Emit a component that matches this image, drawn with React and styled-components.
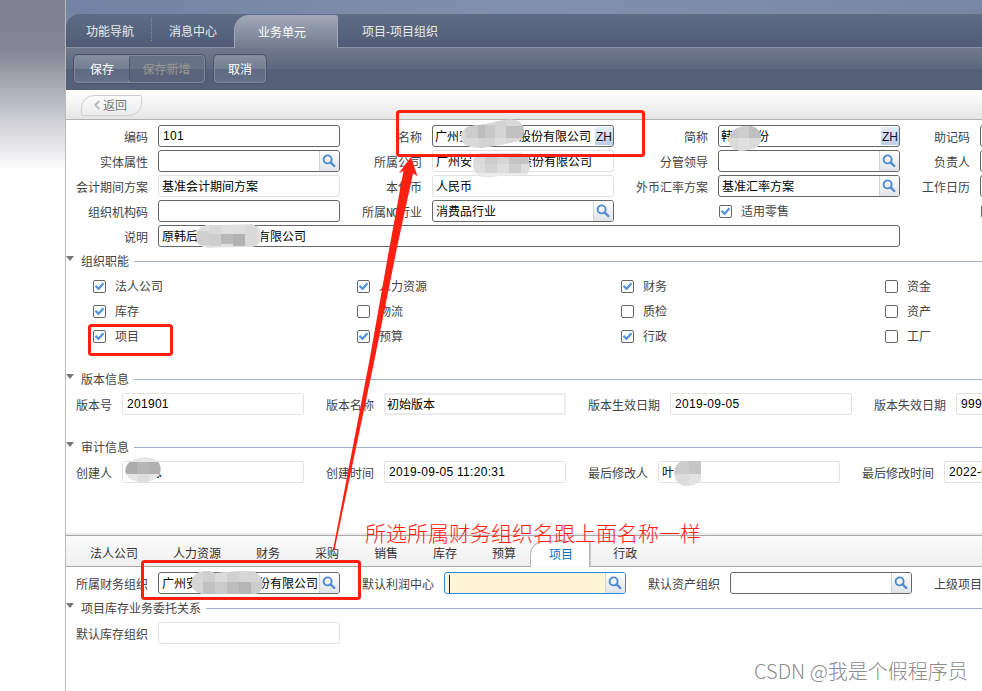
import styled, { createGlobalStyle } from 'styled-components';

const topTabs = [
  { label: '功能导航', divider: true },
  { label: '消息中心' },
  { label: '业务单元', active: true },
  { label: '项目-项目组织' },
];

const duties = [
  ['法人公司', true],
  ['人力资源', true],
  ['财务', true],
  ['资金', false],
  ['库存', true],
  ['物流', false],
  ['质检', false],
  ['资产', false],
  ['项目', true],
  ['预算', true],
  ['行政', true],
  ['工厂', false],
];

const bottomTabs = [
  '法人公司',
  '人力资源',
  '财务',
  '采购',
  '销售',
  '库存',
  '预算',
  '项目',
  '行政',
];

// masked parts of the personal data: outline + grey cells [x, y, w, h, color]
const masks = [
  {
    id: 'name',
    d: 'M461 136C461 129 466 126 478 125L507 119.5C517 118 524 122 524 131C524 139 520 142 511 143L485 147.500C470 149 461 146 461 136Z',
    base: '#d9d9d9',
    cells: [
      [466, 125, 12, 13, '#cccccc'],
      [478, 125, 7, 13, '#bdbdbd'],
      [485, 125, 10, 13, '#c8c8c8'],
      [495, 119, 11, 19, '#d4d4d4'],
      [506, 126, 18, 12, '#c1c1c1'],
      [478, 138, 17, 12, '#d3d3d3'],
      [495, 138, 11, 12, '#dddddd'],
    ],
  },
  {
    id: 'company',
    d: 'M480 153H522Q530 156 530 168Q529 177 520 175L482 177Q473 174 473 165Q473 155 480 153Z',
    base: '#dedede',
    cells: [
      [473, 157, 12, 7, '#dadada'],
      [485, 157, 12, 7, '#cccccc'],
      [497, 157, 12, 7, '#d5d5d5'],
      [509, 157, 21, 7, '#c4c4c4'],
      [485, 164, 12, 14, '#d3d3d3'],
      [509, 164, 12, 10, '#cecece'],
      [473, 173, 57, 5, '#eaeaea'],
    ],
  },
  {
    id: 'remark',
    d: 'M206 225L252 224Q262 227 262 236Q261 246 252 247L208 248Q196 247 196 236Q197 227 206 225Z',
    base: '#e0e0e0',
    cells: [
      [197, 231, 12, 14, '#d0d0d0'],
      [209, 225, 12, 9, '#d8d8d8'],
      [209, 234, 12, 12, '#cecece'],
      [221, 234, 12, 10, '#b9b9b9'],
      [233, 234, 12, 12, '#b2b2b2'],
      [245, 226, 12, 20, '#dadada'],
    ],
  },
  {
    id: 'short',
    d: 'M743 126Q756 124 760 133Q764 142 756 148Q746 152 734 150Q727 144 729 136Q733 128 743 126Z',
    base: '#dadada',
    cells: [
      [729, 126, 9, 12, '#c9c9c9'],
      [738, 126, 11, 12, '#cecece'],
      [749, 126, 13, 12, '#bfbfbf'],
      [738, 138, 11, 13, '#e0e0e0'],
    ],
  },
  {
    id: 'creator',
    d: 'M133 460Q145 454 157 460Q162 466 160 473Q157 482 143 482Q129 482 126 474Q123 465 133 460Z',
    base: '#e6e6e6',
    cells: [
      [125, 462, 12, 12, '#acacac'],
      [137, 462, 12, 12, '#b6b6b6'],
      [149, 462, 13, 12, '#b0b0b0'],
      [137, 474, 12, 9, '#dedede'],
    ],
  },
  {
    id: 'editor',
    d: 'M682 461H701V481Q695 486 688 486Q679 486 676 480Q673 474 675 468Q677 463 682 461Z',
    base: '#e2e2e2',
    cells: [
      [674, 461, 15, 13, '#cccccc'],
      [689, 461, 12, 13, '#c6c6c6'],
      [674, 474, 15, 13, '#dcdcdc'],
    ],
  },
  {
    id: 'finance',
    d: 'M202 571Q209 570 215 573L240 571H254Q263 576 263 584Q262 594 254 594H202Q191 592 191 582Q192 574 202 571Z',
    base: '#d6d6d6',
    cells: [
      [203, 571, 12, 11, '#cfcfcf'],
      [215, 571, 12, 11, '#dbdbdb'],
      [227, 571, 12, 11, '#d0d0d0'],
      [203, 582, 12, 12, '#c2c2c2'],
      [215, 582, 12, 12, '#cbcbcb'],
      [227, 582, 12, 12, '#bdbdbd'],
      [239, 582, 12, 12, '#b5b5b5'],
      [251, 582, 12, 12, '#cdcdcd'],
    ],
  },
];

const SearchIcon = () => (
  <svg width="14" height="14" viewBox="0 0 14 14" fill="none">
    <circle cx="5.6" cy="5.4" r="4" stroke="#4f8bd0" strokeWidth="1.9" />
    <path d="M8.600 8.400L12.300 12" stroke="#4f8bd0" strokeWidth="2.4" strokeLinecap="round" />
  </svg>
);

const Check = ({ checked }) => (
  <CheckBox>
    {checked && (
      <svg width="11" height="11" viewBox="0 0 11 11" fill="none">
        <path d="M1.500 4.800L4.500 7.800L9.500 2.200" stroke="#5293dc" strokeWidth="2.2" />
      </svg>
    )}
  </CheckBox>
);

const Field = ({ children, search, lang, digits, ...rest }) => (
  <InputBox {...rest}>
    <Value $digits={digits}>{children}</Value>
    {search && (
      <SearchBtn>
        <SearchIcon />
      </SearchBtn>
    )}
    {lang && <LangBtn>ZH</LangBtn>}
  </InputBox>
);

const Section = ({ title, top }) => (
  <SectionHead $top={top}>
    <Arrow />
    <span>{title}</span>
    <hr />
  </SectionHead>
);

const App = () => {
  return (
    <>
      <GlobalStyle />
      <Page>
        <SideShade />
        <Main>
          <TopTabs>
            {topTabs.map(({ label, active, divider }) => (
              <TopTab key={label} $active={active} $divider={divider}>
                {label}
              </TopTab>
            ))}
          </TopTabs>
          <Toolbar>
            <BtnGroup>
              <ToolBtn $width={54}>保存</ToolBtn>
              <ToolBtn $width={75} $disabled>
                保存新增
              </ToolBtn>
            </BtnGroup>
            <BtnGroup>
              <ToolBtn $width={50}>取消</ToolBtn>
            </BtnGroup>
          </Toolbar>
          <BackBar>
            <BackBtn>
              <svg width="6" height="10" viewBox="0 0 6 10" fill="none">
                <path d="M5.200 1L1.400 5L5.200 9" stroke="#bdbdbd" strokeWidth="2" />
              </svg>
              返回
            </BackBtn>
          </BackBar>

          <BaseForm>
            <Label>编码</Label>
            <Field digits>101</Field>
            <Label>名称</Label>
            <Field lang="zh" $tight>
              广州安
              <Gap $width={48} />
              股份有限公司
            </Field>
            <Label>简称</Label>
            <Field lang="zh" $tight>
              韩
              <Gap $width={24} />份
            </Field>
            <Label>助记码</Label>
            <Field />

            <Label>实体属性</Label>
            <Field search />
            <Label>所属公司</Label>
            <Field $readOnly>
              广州安
              <Gap $width={48} />
              股份有限公司
            </Field>
            <Label>分管领导</Label>
            <Field search />
            <Label>负责人</Label>
            <Field search />

            <Label>会计期间方案</Label>
            <Field $readOnly>基准会计期间方案</Field>
            <Label>本位币</Label>
            <Field $readOnly>人民币</Field>
            <Label>外币汇率方案</Label>
            <Field search>基准汇率方案</Field>
            <Label>工作日历</Label>
            <Field search />

            <Label>组织机构码</Label>
            <Field />
            <Label>
              所属<Mono>NC</Mono>行业
            </Label>
            <Field search>消费品行业</Field>
            <span />
            <CheckItem $gap={9} $indent={1}>
              <Check checked />
              <span>适用零售</span>
            </CheckItem>
            <span />
            <CheckItem $indent={1}>
              <Check />
            </CheckItem>

            <Label>说明</Label>
            <WideCell>
              <Field>
                原韩后
                <Gap $width={60} />
                有限公司
              </Field>
            </WideCell>
          </BaseForm>

          <Section title="组织职能" top={6} />
          <DutyGrid>
            {duties.map(([label, checked]) => (
              <CheckItem key={label} $gap={9}>
                <Check checked={checked} />
                <span>{label}</span>
              </CheckItem>
            ))}
          </DutyGrid>

          <Section title="版本信息" top={24} />
          <InfoRow $columns="46px 182px 80px 182px 104px 182px 104px 182px">
            <InfoLabel>版本号</InfoLabel>
            <Field $readOnly digits>
              201901
            </Field>
            <InfoLabel>版本名称</InfoLabel>
            <Field $readOnly $square>
              初始版本
            </Field>
            <InfoLabel>版本生效日期</InfoLabel>
            <Field $readOnly digits>
              2019-09-05
            </Field>
            <InfoLabel>版本失效日期</InfoLabel>
            <Field $readOnly digits>
              9999-12-31
            </Field>
          </InfoRow>

          <Section title="审计信息" top={22} />
          <InfoRow $columns="46px 182px 80px 182px 92px 182px 104px 182px">
            <InfoLabel>创建人</InfoLabel>
            <Field $readOnly>
              <Gap $width={24} />息
            </Field>
            <InfoLabel>创建时间</InfoLabel>
            <Field $readOnly digits>
              2019-09-05 11:20:31
            </Field>
            <InfoLabel>最后修改人</InfoLabel>
            <Field $readOnly>叶</Field>
            <InfoLabel>最后修改时间</InfoLabel>
            <Field $readOnly digits>
              2022-05-10
            </Field>
          </InfoRow>

          <BottomTabs>
            {bottomTabs.map(label => (
              <BottomTab key={label} $active={label === '项目'}>
                {label}
              </BottomTab>
            ))}
          </BottomTabs>
          <InfoRow $top={5} $columns="82px 182px 104px 182px 104px 182px 104px 182px">
            <InfoLabel>所属财务组织</InfoLabel>
            <Field search>
              广州安
              <Gap $width={48} />
              股份有限公司
            </Field>
            <InfoLabel>默认利润中心</InfoLabel>
            <Field search $focused>
              <Caret />
            </Field>
            <InfoLabel>默认资产组织</InfoLabel>
            <Field search />
            <InfoLabel>上级项目组织</InfoLabel>
            <Field search />
          </InfoRow>
          <Section title="项目库存业务委托关系" top={4} />
          <InfoRow $top={6} $columns="82px 182px">
            <InfoLabel>默认库存组织</InfoLabel>
            <Field $readOnly />
          </InfoRow>
        </Main>

        <Overlay viewBox="0 0 982 691">
          {masks.map(({ id, d, base, cells }) => (
            <g key={id} clipPath={`url(#mask-${id})`}>
              <clipPath id={`mask-${id}`}>
                <path d={d} />
              </clipPath>
              <path d={d} fill={base} />
              {cells.map(([x, y, w, h, fill]) => (
                <rect key={`${x}-${y}`} x={x} y={y} width={w} height={h} fill={fill} />
              ))}
            </g>
          ))}
          <g fill="none" stroke="#ff2012" strokeWidth="3">
            <rect x="397.500" y="111.500" width="246" height="44" rx="2" />
            <rect x="89.500" y="325.500" width="82" height="29" rx="2" />
            <rect x="142.500" y="561.500" width="217" height="37" rx="2" />
          </g>
          <path
            d="M333 550L369.500 360L389 250L403.500 171L399 173L411 157L417.500 176L413 173.500L396.500 250L374.500 360L334.500 550Z"
            fill="#ff2012"
          />
        </Overlay>
        <Note>所选所属财务组织名跟上面名称一样</Note>
        <Watermark>CSDN @我是个假程序员</Watermark>
      </Page>
    </>
  );
};

export default App;

const GlobalStyle = createGlobalStyle`
  * {
    box-sizing: border-box;
  }
  body {
    margin: 0;
    overflow: hidden;
    background: #fff;
    color: #444;
    font-family: 'Liberation Sans', 'Noto Sans CJK SC', sans-serif;
    font-size: 12px;
  }
`;

const Page = styled.div`
  display: flex;
  position: relative;
  width: 982px;
  height: 691px;
  overflow: hidden;
`;

const SideShade = styled.aside`
  flex: none;
  width: 66px;
  border-right: 1px solid #b9b9bb;
  background: linear-gradient(#80808f 0, #858594 50px, #a9a9b4 85px, #d0d0d6 123px, #fff 170px);
`;

const Main = styled.main`
  flex: 1;
  min-width: 0;
  overflow: hidden;
`;

const TopTabs = styled.nav`
  display: flex;
  height: 48px;
  padding-top: 14px;
  background:
    radial-gradient(circle at 14px 14px, transparent 14px, #7486a3 14.5px) 0 14px / 14px 14px no-repeat,
    linear-gradient(#5f6c85, #505c76) 0 14px / 100% 34px no-repeat,
    linear-gradient(90deg, #7283a3, #8190ad 50%, #7787a5);
  box-shadow: inset 0 -1px #8b93a3;
`;

const TopTab = styled.div`
  display: flex;
  align-items: center;
  height: ${props => (props.$active ? '33px' : '34px')};
  margin: ${props => (props.$active ? '1px 0 0' : '0')};
  padding: ${props => (props.$active ? '1px 31px 0 23px' : '2px 17px 0 20px')};
  border: 1px solid transparent;
  border-width: ${props => (props.$active ? '1px 1px 0' : '0')};
  color: #e8ebf0;
  line-height: 16px;

  ${props =>
    props.$divider &&
    `
    padding-right: 18px;
    background: repeating-linear-gradient(#8390a5 0 1px, transparent 1px 2px) right 4px / 1px 23px no-repeat;
    & + div { padding-left: 17px; }
  `}
  ${props =>
    props.$active &&
    `
    border-color: #a1a9b7;
    border-radius: 15px 3px 0 0;
    background: linear-gradient(#a0a8b7, #717b8e);
    color: #fff;
    & + div { padding-left: 24px; }
  `}
`;

const Toolbar = styled.div`
  display: flex;
  gap: 7px;
  height: 42px;
  padding: 6px 7px;
  background: linear-gradient(#717a8c, #5c6780 21px, #546078 21px, #546078);
`;

const BtnGroup = styled.div`
  display: flex;
  height: 30px;
  padding: 1px;
  border: 1px solid #48536a;
  border-radius: 5px;
  background: #7f8a9d;
`;

const ToolBtn = styled.button`
  width: ${props => props.$width}px;
  padding: 0 0 1px;
  border: 0;
  border-radius: 3px;
  background: ${props =>
    props.$disabled
      ? 'linear-gradient(#677287 50%, #5a657b 50%)'
      : 'linear-gradient(#858e9f, #737e91 50%, #5e6a80 50%, #67728a)'};
  color: ${props => (props.$disabled ? '#989890' : '#fff')};
  font-family: inherit;
  font-size: 12px;
  box-shadow: ${props => (props.$disabled ? 'inset 1px 0 #4c576c' : 'none')};
`;

const BackBar = styled.div`
  height: 30px;
  padding: 5px 15px;
  border-bottom: 1px solid #b0b0b0;
  background: linear-gradient(#fff, #e6e6e6);
`;

const BackBtn = styled.button`
  display: flex;
  align-items: center;
  gap: 3px;
  width: 61px;
  height: 21px;
  padding: 0 0 3px 12px;
  border: 1px solid #cfcfcf;
  border-radius: 13px 2px 13px 2px;
  background: linear-gradient(#fcfcfc, #ebebee);
  color: #777;
  font-family: inherit;
  font-size: 12px;

  & > svg {
    margin-top: 2px;
  }
`;

const BaseForm = styled.section`
  display: grid;
  grid-template-columns: 92px 182px 92px 182px 104px 182px 80px 182px;
  grid-auto-rows: 22px;
  row-gap: 3px;
  width: 1096px;
  padding-top: 5px;
`;

const Label = styled.label`
  padding: 2px 10px 0 0;
  line-height: 22px;
  text-align: right;
  white-space: nowrap;
`;

const Mono = styled.span`
  font-family: 'Liberation Mono', monospace;
  letter-spacing: -1.2px;
`;

const WideCell = styled.div`
  grid-column: 2 / span 5;
`;

const InputBox = styled.div`
  display: flex;
  height: 22px;
  overflow: hidden;
  padding-left: ${props => (props.$tight ? '2px' : '3px')};
  border: 1px solid #666;
  border-radius: 3px;
  background: #fff;

  ${props => props.$readOnly && 'border-color: #e1e1e1;'}
  ${props =>
    props.$square &&
    `
    padding-left: 1px;
    border: 2px solid #ececec;
    border-radius: 0;
  `}
  ${props => props.$focused && 'border-color: #2a8be6; background: #fff6d5;'}
`;

const Value = styled.div`
  flex: 1;
  align-self: center;
  padding: ${props => (props.$digits ? '0 0 0 1px' : '2px 0 0')};
  color: #000;
  line-height: 18px;
  letter-spacing: ${props => (props.$digits ? '0.3px' : '0')};
  white-space: nowrap;
`;

const Gap = styled.span`
  display: inline-block;
  width: ${props => props.$width}px;
`;

const Caret = styled.span`
  display: block;
  width: 1px;
  height: 18px;
  margin: -1px 0 0 1px;
  background: #222;
`;

const SearchBtn = styled.span`
  display: flex;
  flex: none;
  align-items: center;
  justify-content: center;
  width: 20px;
  padding-right: 1px;
  border-left: 1px solid #cfd2d6;
  background: linear-gradient(#fff, #e0e3e8);
`;

const LangBtn = styled.span`
  flex: none;
  width: 18px;
  height: 18px;
  margin: 1px 0;
  background: linear-gradient(#e3edf7, #b9cfe6);
  color: #111;
  line-height: 20px;
  text-align: center;
`;

const CheckItem = styled.div`
  display: flex;
  align-items: center;
  gap: ${props => props.$gap || 0}px;
  height: 22px;
  padding-left: ${props => props.$indent || 0}px;
  line-height: 22px;

  & > span + span {
    padding-top: 2px;
  }
`;

const CheckBox = styled.span`
  flex: none;
  width: 13px;
  height: 13px;
  border: 1px solid #666;
  border-radius: 2px;
  background: #fff;

  & > svg {
    display: block;
  }
`;

const SectionHead = styled.div`
  display: flex;
  align-items: center;
  height: 16px;
  margin-top: ${props => props.$top}px;
  line-height: 16px;

  & > span {
    margin-left: 7px;
    padding-top: 2px;
  }
  & > hr {
    flex: 1;
    height: 1px;
    margin: 0 0 0 5px;
    border: 0;
    background: #9db0c8;
  }
`;

const Arrow = styled.i`
  margin-top: -5px;
  border: solid transparent;
  border-width: 5px 4.5px 0;
  border-top-color: #777;
`;

const DutyGrid = styled.section`
  display: grid;
  grid-template-columns: repeat(4, 264px);
  row-gap: 3px;
  width: 1096px;
  padding: 6px 0 0 27px;
`;

const InfoRow = styled.section`
  display: grid;
  grid-template-columns: ${props => props.$columns};
  width: 1096px;
  padding: ${props => (props.$top === undefined ? 6 : props.$top)}px 0 0 10px;
`;

const InfoLabel = styled.label`
  padding-top: 2px;
  line-height: 22px;
  white-space: nowrap;

  &:not(:first-child) {
    padding-left: 22px;
  }
`;

const BottomTabs = styled.nav`
  display: flex;
  height: 34px;
  margin-top: 48px;
  padding: 3px 0 0 12px;
  background:
    linear-gradient(#a8a8a8, #a8a8a8) 0 33px / 100% 1px no-repeat,
    linear-gradient(#a8a8a8, #a8a8a8) 0 2px / 100% 1px no-repeat,
    linear-gradient(#ececec, #ececec) 0 0 / 100% 2px no-repeat,
    linear-gradient(#fdfdfd, #efefef);
`;

const BottomTab = styled.div`
  padding: 3px 23px 0 12px;
  color: #333;
  line-height: 30px;

  ${props =>
    props.$active &&
    `
    height: 26px;
    margin: 5px 11px 0 -9px;
    padding: 0 16px 0 18px;
    border: 1px solid #b4b4b4;
    border-bottom: 0;
    border-radius: 14px 2px 0 0;
    background: #fff;
    box-shadow: 1px 0 1px #ccc;
    color: #0b6fc5;
    line-height: 26px;
  `}
`;

const Overlay = styled.svg`
  position: absolute;
  top: 0;
  left: 0;
  width: 982px;
  height: 691px;
  pointer-events: none;
`;

const Note = styled.p`
  position: absolute;
  top: 519px;
  left: 365px;
  margin: 0;
  color: #ff2012;
  font-size: 21px;
  font-weight: 300;
  line-height: 30px;
  white-space: nowrap;
`;

const Watermark = styled.p`
  position: absolute;
  top: 656px;
  left: 754px;
  margin: 0;
  color: #8c8c8c;
  font-family: 'Noto Sans CJK SC', sans-serif;
  font-size: 20px;
  font-weight: 300;
  line-height: 30px;
  white-space: nowrap;
`;
